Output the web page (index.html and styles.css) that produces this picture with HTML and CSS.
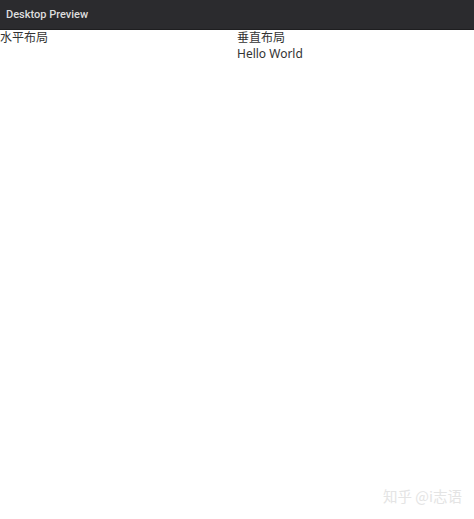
FILE: index.html
```html
<!DOCTYPE html>
<html lang="zh">
<head>
<meta charset="utf-8">
<title>Desktop Preview</title>
<link rel="stylesheet" href="styles.css">
</head>
<body>
<header class="titlebar">Desktop Preview</header>
<main class="row">
  <section class="col">
    <div class="item">水平布局</div>
  </section>
  <section class="col">
    <div class="item">垂直布局</div>
    <div class="item">Hello World</div>
  </section>
</main>
<div class="watermark">知乎 @i志语</div>
</body>
</html>
```
FILE: styles.css
```css
html, body {
  margin: 0;
  padding: 0;
  height: 100%;
  background: #ffffff;
}
body {
  font-family: "Noto Sans", "Noto Sans CJK SC", sans-serif;
  color: #333333;
  position: relative;
  overflow: hidden;
}
.titlebar {
  height: 29px;
  background: #2b2b2e;
  border-bottom: 1px solid #1e1e20;
  color: #dedede;
  font-family: "Roboto", "Noto Sans", sans-serif;
  font-weight: 500;
  font-size: 11px;
  line-height: 29px;
  padding-left: 6px;
}
.row {
  display: flex;
}
.col {
  flex: 1 1 50%;
  display: flex;
  flex-direction: column;
}
.item {
  font-size: 12px;
  line-height: 16px;
}
.watermark {
  position: absolute;
  right: 12px;
  bottom: 13px;
  font-family: "Noto Sans CJK SC", sans-serif;
  font-size: 14.5px;
  color: #e4e4e4;
  text-shadow: 0 0 1px #ffffff;
}
```
